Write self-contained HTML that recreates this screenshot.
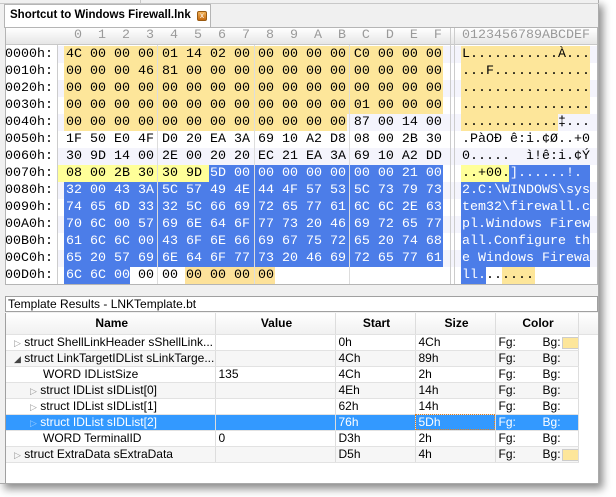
<!DOCTYPE html>
<html><head><meta charset="utf-8"><style>
*{margin:0;padding:0;box-sizing:border-box}
body{width:616px;height:497px;background:#fff;position:relative;overflow:hidden;font-family:"Liberation Sans",sans-serif}
.win{position:absolute;left:0;top:0;width:599px;height:484px;background:#f0f0f0;border-right:1px solid #aaa;border-bottom:1px solid #aaa;box-shadow:4px 5px 8px rgba(0,0,0,.45)}
.a{position:absolute}
.mono{font-family:"Liberation Mono",monospace;font-size:13.33px;white-space:pre;line-height:17px}
.hx{position:absolute;left:5px;top:27px;width:593px;height:258px;background:#fff;border:1px solid #b5b5b5;overflow:hidden}
.t td,.t th{font-size:12px;height:16px;border-right:1px solid #ddd;border-bottom:1px solid #e2e2e2;padding:0 0 0 3px;white-space:nowrap;overflow:hidden}
</style></head><body>
<div class="win">
 <div class="a" style="left:0;top:3px;width:599px;height:1px;background:#c8c8c8"></div>
 <div class="a" style="left:140px;top:0;width:1px;height:4px;background:#c8c8c8"></div>
 <div class="a" style="left:4px;top:4px;width:207px;height:24px;background:#fff;border:1px solid #b5b5b5;border-bottom:none"></div>
 <div class="a" style="left:10px;top:9px;font-size:11.5px;font-weight:bold;color:#000">Shortcut to Windows Firewall.lnk</div>
 <div class="a" style="left:197px;top:11px;width:10px;height:10px;border-radius:2px;background:linear-gradient(#f2b35a,#c66a10);border:1px solid #9a5a10;font-size:8px;color:#fff;text-align:center;line-height:8px">x</div>
 <div class="hx">
  <div class="a" style="left:0;top:0;width:593px;height:17px;background:linear-gradient(#fff,#e6e6e6);border-bottom:1px solid #c8c8c8"></div>
  <div class="a mono" style="left:68px;top:-1px;color:#9a9a9a">0  1  2  3  4  5  6  7  8  9  A  B  C  D  E  F</div>
  <div class="a mono" style="left:456px;top:-1px;color:#9a9a9a">0123456789ABCDEF</div>
  <div class="a" style="left:51px;top:18px;width:542px;height:17px;background:#f4f4fc"></div>
  <div class="a" style="left:51px;top:52px;width:542px;height:17px;background:#f4f4fc"></div>
  <div class="a" style="left:51px;top:86px;width:542px;height:17px;background:#f4f4fc"></div>
  <div class="a" style="left:51px;top:120px;width:542px;height:17px;background:#f4f4fc"></div>
  <div class="a" style="left:51px;top:154px;width:542px;height:17px;background:#f4f4fc"></div>
  <div class="a" style="left:51px;top:188px;width:542px;height:17px;background:#f4f4fc"></div>
  <div class="a" style="left:51px;top:222px;width:542px;height:17px;background:#f4f4fc"></div>
  <div class="a" style="left:51px;top:256px;width:542px;height:17px;background:#f4f4fc"></div>
  <div class="a" style="left:58px;top:18px;width:379px;height:68px;background:#fde69a"></div>
  <div class="a" style="left:58px;top:86px;width:283px;height:17px;background:#fde69a"></div>
  <div class="a" style="left:455px;top:18px;width:129px;height:68px;background:#fde69a"></div>
  <div class="a" style="left:455px;top:86px;width:97px;height:17px;background:#fde69a"></div>
  <div class="a" style="left:51px;top:137px;width:153px;height:17px;background:#ffff99"></div>
  <div class="a" style="left:455px;top:137px;width:48px;height:17px;background:#ffff99"></div>
  <div class="a" style="left:203px;top:137px;width:234px;height:17px;background:#4c7de8"></div>
  <div class="a" style="left:503px;top:137px;width:81px;height:17px;background:#4c7de8"></div>
  <div class="a" style="left:58px;top:154px;width:379px;height:85px;background:#4c7de8"></div>
  <div class="a" style="left:455px;top:154px;width:129px;height:85px;background:#4c7de8"></div>
  <div class="a" style="left:58px;top:239px;width:66px;height:17px;background:#4c7de8"></div>
  <div class="a" style="left:455px;top:239px;width:25px;height:17px;background:#4c7de8"></div>
  <div class="a" style="left:179px;top:239px;width:90px;height:17px;background:#fde29a"></div>
  <div class="a" style="left:496px;top:239px;width:33px;height:17px;background:#fde69a"></div>
  <div class="a" style="left:51px;top:17px;width:1px;height:241px;background:#ccc"></div>
  <div class="a" style="left:151px;top:17px;width:1px;height:241px;background:#ddd"></div>
  <div class="a" style="left:248px;top:17px;width:1px;height:241px;background:#ddd"></div>
  <div class="a" style="left:343px;top:17px;width:1px;height:241px;background:#ddd"></div>
  <div class="a" style="left:444px;top:0;width:1px;height:258px;background:#ccc"></div>
  <div class="a" style="left:448px;top:0;width:1px;height:258px;background:#ccc"></div>
  <div class="a mono" style="left:-1px;top:18px;color:#000">0000h:
0010h:
0020h:
0030h:
0040h:
0050h:
0060h:
0070h:
0080h:
0090h:
00A0h:
00B0h:
00C0h:
00D0h:</div>
  <div class="a mono" style="left:60px;top:18px;color:#000">4C 00 00 00 01 14 02 00 00 00 00 00 C0 00 00 00
00 00 00 46 81 00 00 00 00 00 00 00 00 00 00 00
00 00 00 00 00 00 00 00 00 00 00 00 00 00 00 00
00 00 00 00 00 00 00 00 00 00 00 00 01 00 00 00
00 00 00 00 00 00 00 00 00 00 00 00 87 00 14 00
1F 50 E0 4F D0 20 EA 3A 69 10 A2 D8 08 00 2B 30
30 9D 14 00 2E 00 20 20 EC 21 EA 3A 69 10 A2 DD
08 00 2B 30 30 9D <span style="color:#fff">5D 00 00 00 00 00 00 00 21 00</span>
<span style="color:#fff">32 00 43 3A 5C 57 49 4E 44 4F 57 53 5C 73 79 73
74 65 6D 33 32 5C 66 69 72 65 77 61 6C 6C 2E 63
70 6C 00 57 69 6E 64 6F 77 73 20 46 69 72 65 77
61 6C 6C 00 43 6F 6E 66 69 67 75 72 65 20 74 68
65 20 57 69 6E 64 6F 77 73 20 46 69 72 65 77 61
6C 6C 00</span> 00 00 00 00 00 00</div>
  <div class="a mono" style="left:456px;top:18px;color:#000">L...........À...
...F............
................
................
............‡...
.PàOÐ ê:i.¢Ø..+0
0.....  ì!ê:i.¢Ý
..+00.<span style="color:#fff">]......!.</span>
<span style="color:#fff">2.C:\WINDOWS\sys
tem32\firewall.c
pl.Windows Firew
all.Configure th
e Windows Firewa
ll.</span>......</div>
 </div>
 <div class="a" style="left:5px;top:296px;width:593px;height:16px;background:#fff;border:1px solid #a0a0a0;font-size:12px;line-height:14px;padding-left:2px">Template Results - LNKTemplate.bt</div>
 <div class="a" style="left:5px;top:313px;width:593px;height:170px;background:#fff;border-left:1px solid #a0a0a0"></div>
 <table class="t a" style="left:6px;top:313px;border-collapse:collapse;table-layout:fixed;width:592px">
  <colgroup><col style="width:209px"><col style="width:120px"><col style="width:80px"><col style="width:80px"><col style="width:83px"><col style="width:20px"></colgroup>
  <tr style="background:linear-gradient(#fff,#f1f1f1)"><th style="height:21px;text-align:center">Name</th><th style="text-align:center">Value</th><th style="text-align:center">Start</th><th style="text-align:center">Size</th><th style="text-align:center">Color</th><th style="border-right:none"></th></tr>
  <tr><td style="padding-left:8px"><span style="color:#999;font-size:9px">▷</span> struct ShellLinkHeader sShellLink...</td><td></td><td>0h</td><td>4Ch</td><td>Fg:&nbsp;&nbsp;&nbsp;&nbsp;&nbsp;&nbsp;&nbsp;&nbsp;Bg:<span style="display:inline-block;width:18px;height:12px;background:#fde69a;border:1px solid #ccc;vertical-align:middle;margin-left:1px"></span></td><td style="border:none"></td></tr>
  <tr style="background:#f6f6f6"><td style="padding-left:8px"><span style="color:#444;font-size:9px">◢</span> struct LinkTargetIDList sLinkTarge...</td><td></td><td>4Ch</td><td>89h</td><td>Fg:&nbsp;&nbsp;&nbsp;&nbsp;&nbsp;&nbsp;&nbsp;&nbsp;Bg:</td><td style="border:none;background:#fff"></td></tr>
  <tr><td style="padding-left:37px">WORD IDListSize</td><td>135</td><td>4Ch</td><td>2h</td><td>Fg:&nbsp;&nbsp;&nbsp;&nbsp;&nbsp;&nbsp;&nbsp;&nbsp;Bg:</td><td style="border:none"></td></tr>
  <tr style="background:#f6f6f6"><td style="padding-left:24px"><span style="color:#999;font-size:9px">▷</span> struct IDList sIDList[0]</td><td></td><td>4Eh</td><td>14h</td><td>Fg:&nbsp;&nbsp;&nbsp;&nbsp;&nbsp;&nbsp;&nbsp;&nbsp;Bg:</td><td style="border:none;background:#fff"></td></tr>
  <tr><td style="padding-left:24px"><span style="color:#999;font-size:9px">▷</span> struct IDList sIDList[1]</td><td></td><td>62h</td><td>14h</td><td>Fg:&nbsp;&nbsp;&nbsp;&nbsp;&nbsp;&nbsp;&nbsp;&nbsp;Bg:</td><td style="border:none"></td></tr>
  <tr style="background:#3399ff;color:#fff"><td style="padding-left:24px"><span style="color:#9cf;font-size:9px">▷</span> struct IDList sIDList[2]</td><td></td><td>76h</td><td style="outline:1px dotted #e08020;outline-offset:-1px">5Dh</td><td>Fg:&nbsp;&nbsp;&nbsp;&nbsp;&nbsp;&nbsp;&nbsp;&nbsp;Bg:</td><td style="border:none;background:#fff"></td></tr>
  <tr><td style="padding-left:37px">WORD TerminalID</td><td>0</td><td>D3h</td><td>2h</td><td>Fg:&nbsp;&nbsp;&nbsp;&nbsp;&nbsp;&nbsp;&nbsp;&nbsp;Bg:</td><td style="border:none"></td></tr>
  <tr style="background:#f6f6f6"><td style="padding-left:8px"><span style="color:#999;font-size:9px">▷</span> struct ExtraData sExtraData</td><td></td><td>D5h</td><td>4h</td><td>Fg:&nbsp;&nbsp;&nbsp;&nbsp;&nbsp;&nbsp;&nbsp;&nbsp;Bg:<span style="display:inline-block;width:18px;height:12px;background:#fde69a;border:1px solid #ccc;vertical-align:middle;margin-left:1px"></span></td><td style="border:none;background:#fff"></td></tr>
 </table>
</div>
</body></html>
